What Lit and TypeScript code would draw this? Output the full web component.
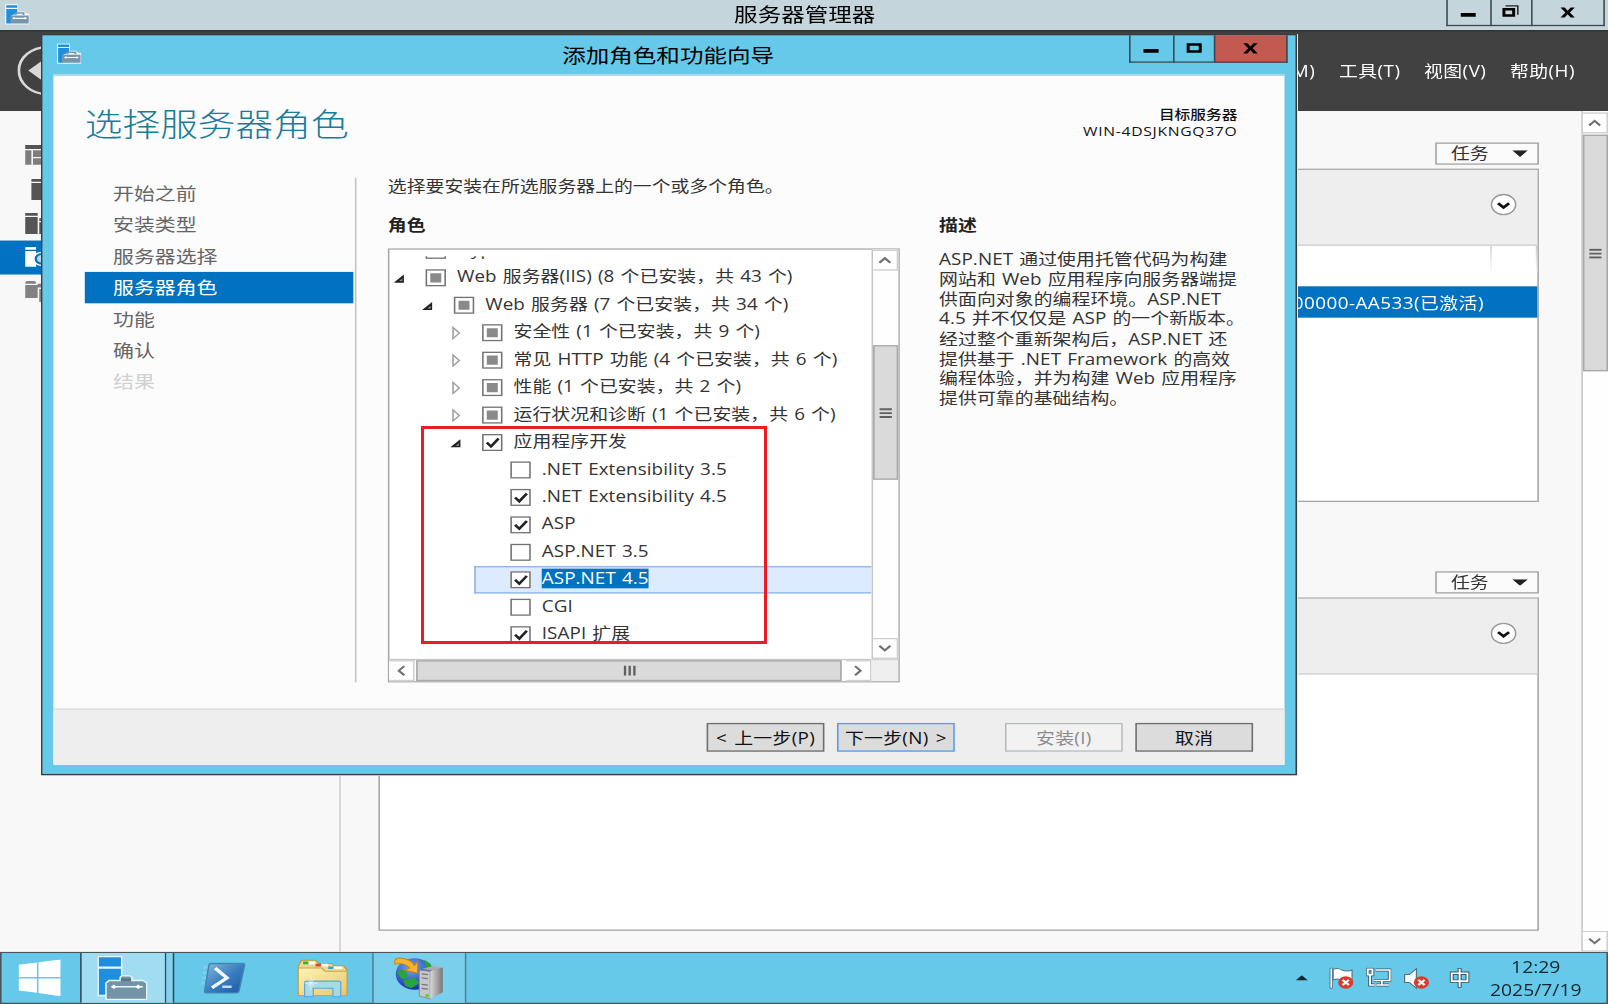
import { css, html, svg, LitElement, TemplateResult } from "lit";
import { customElement, property } from "lit/decorators.js";
import { classMap } from "lit/directives/class-map.js";

type CheckState = "none" | "partial" | "checked";

interface RoleRow {
  level: number;
  label: string;
  state: CheckState;
  expander?: "open" | "closed";
  selected?: boolean;
}

const STEPS = ["开始之前", "安装类型", "服务器选择", "服务器角色", "功能", "确认", "结果"];

const ROLES: RoleRow[] = [
  { level: 0, label: "Hyper-V", state: "none" },
  { level: 0, label: "Web 服务器(IIS) (8 个已安装，共 43 个)", state: "partial", expander: "open" },
  { level: 1, label: "Web 服务器 (7 个已安装，共 34 个)", state: "partial", expander: "open" },
  { level: 2, label: "安全性 (1 个已安装，共 9 个)", state: "partial", expander: "closed" },
  { level: 2, label: "常见 HTTP 功能 (4 个已安装，共 6 个)", state: "partial", expander: "closed" },
  { level: 2, label: "性能 (1 个已安装，共 2 个)", state: "partial", expander: "closed" },
  { level: 2, label: "运行状况和诊断 (1 个已安装，共 6 个)", state: "partial", expander: "closed" },
  { level: 2, label: "应用程序开发", state: "checked", expander: "open" },
  { level: 3, label: ".NET Extensibility 3.5", state: "none" },
  { level: 3, label: ".NET Extensibility 4.5", state: "checked" },
  { level: 3, label: "ASP", state: "checked" },
  { level: 3, label: "ASP.NET 3.5", state: "none" },
  { level: 3, label: "ASP.NET 4.5", state: "checked", selected: true },
  { level: 3, label: "CGI", state: "none" },
  { level: 3, label: "ISAPI 扩展", state: "checked" },
];

const DESCRIPTION = [
  "ASP.NET 通过使用托管代码为构建",
  "网站和 Web 应用程序向服务器端提",
  "供面向对象的编程环境。ASP.NET",
  "4.5 并不仅仅是 ASP 的一个新版本。",
  "经过整个重新架构后，ASP.NET 还",
  "提供基于 .NET Framework 的高效",
  "编程体验，并为构建 Web 应用程序",
  "提供可靠的基础结构。",
];

const toolboxIcon = html`
  <svg width="16" height="16" viewBox="0 0 16 16">
    <path d="M.3.3h8.200v5.500h4l1.500 1.500h1.700v8.400H.3z" fill="#fff" opacity=".85"/>
    <path d="M1 1h7v2H1zM1 3.800h7V7l-4 2v6H1z" fill="#1f8fdd"/>
    <path d="M3.700 8.800h11.600v6.200H3.700z" fill="#7695a9"/>
    <path d="M7 8.500V7h5v1.500" fill="none" stroke="#7695a9" stroke-width="1.200"/>
    <path d="M5 11h9" stroke="#fff" stroke-width=".9"/>
    <path d="M6 10.200v1.600M13 10.200v1.600" stroke="#fff" stroke-width=".9"/>
  </svg>`;

@customElement("window-buttons")
class WindowButtons extends LitElement {
  @property({ type: Boolean }) restored = false;

  static styles = css`
    :host {
      display: flex;
    }
    .btn {
      box-sizing: border-box;
      height: 100%;
      border: 1px solid #3c4a50;
      border-top: none;
      border-right: none;
    }
    .min {
      width: 28px;
    }
    .max {
      width: 26px;
    }
    .close {
      width: 47px;
      border-right: 1px solid #3c4a50;
      background: var(--close-color, transparent);
    }
    svg {
      display: block;
      width: 100%;
      height: 100%;
    }
  `;

  render() {
    return html`
      <div class="btn min">
        <svg viewBox="0 0 28 20"><path d="M8.500 10.500h10v3h-10z"/></svg>
      </div>
      <div class="btn max">
        <svg viewBox="0 0 26 20">
          ${this.restored
            ? svg`<path d="M8 7.500h6.500v5H8z" fill="none" stroke="#000" stroke-width="2"/>
                  <path d="M9 4.800h8.300v7" fill="none" stroke="#222" stroke-width="1"/>`
            : svg`<path d="M9 7h8v5.500H9z" fill="none" stroke="#000" stroke-width="2"/>`}
        </svg>
      </div>
      <div class="btn close">
        <svg viewBox="0 0 47 20">
          <path d="M18.500 6h2.800l2 2.600 2-2.600h2.800l-3.300 4 3.300 4h-2.800l-2-2.600-2 2.600h-2.800l3.300-4z"/>
        </svg>
      </div>
    `;
  }
}

@customElement("scroll-bar")
class ScrollBar extends LitElement {
  @property({ type: Boolean, reflect: true }) horizontal = false;
  @property({ type: Number }) start = 0;
  @property({ type: Number }) size = 0;

  static styles = css`
    :host {
      display: flex;
      flex-direction: column;
      box-sizing: border-box;
      background: #fefefe;
      border-left: 1px solid #c6c6c6;
    }
    :host([horizontal]) {
      flex-direction: row;
      border-left: none;
      border-top: 1px solid #c6c6c6;
    }
    .arrow {
      flex: none;
      box-sizing: border-box;
      width: 16px;
      height: 16px;
      background: #fff;
      border: 1px solid #cfcfcf;
      border-left: none;
    }
    .track {
      flex: 1;
      display: flex;
      flex-direction: inherit;
    }
    .thumb {
      box-sizing: border-box;
      display: flex;
      align-items: center;
      justify-content: center;
      background: #dadada;
      border: 1px solid #a8a8a8;
    }
    svg {
      display: block;
    }
    .left {
      transform: rotate(-90deg);
    }
    .right {
      transform: rotate(90deg);
    }
    .down {
      transform: rotate(180deg);
    }
  `;

  private arrow(direction: string) {
    return html`
      <div class="arrow">
        <svg class=${direction} width="15" height="14" viewBox="0 0 15 14">
          <path d="M4 9l3.500-3.500L11 9" fill="none" stroke="#707070" stroke-width="1.500"/>
        </svg>
      </div>`;
  }

  render() {
    const margin = this.horizontal ? "margin-left" : "margin-top";
    const length = this.horizontal ? "width" : "height";
    return html`
      ${this.arrow(this.horizontal ? "left" : "up")}
      <div class="track">
        <div class="thumb" style="${margin}:${this.start}px;${length}:${this.size}px">
          <svg width="8" height="8" viewBox="0 0 8 8" class=${this.horizontal ? "right" : ""}>
            <path d="M0 1h8M0 4h8M0 7h8" stroke="#606060" stroke-width="1.500"/>
          </svg>
        </div>
      </div>
      ${this.arrow(this.horizontal ? "right" : "down")}
    `;
  }
}

@customElement("server-manager")
class ServerManager extends LitElement {
  static styles = css`
    :host {
      display: flex;
      flex-direction: column;
      height: 728px;
    }
    .title-bar {
      box-sizing: border-box;
      height: 23px;
      padding: 0 2px 0 3px;
      display: grid;
      grid-template-columns: 101px 1fr 101px;
      background: #c4d6dc;
      color: #000;
    }
    .title-bar svg {
      margin-top: 3px;
    }
    .title {
      text-align: center;
      font-size: 15px;
      line-height: 22px;
    }
    window-buttons {
      height: 20px;
    }
    .banner {
      height: 62px;
      box-sizing: border-box;
      border-top: 1px solid #333;
      display: flex;
      align-items: center;
      justify-content: space-between;
      padding: 0 21px 1px 11px;
      background: #414141;
    }
    .menu {
      display: flex;
      gap: 15px;
      color: #fff;
      font-size: 12px;
      letter-spacing: 0.3px;
    }
    .body {
      flex: 1;
      display: flex;
      min-height: 0;
      background: #f8f8f8;
    }
    .nav {
      width: 217px;
      padding-top: 21px;
      border-right: 1px solid #cdcdcd;
      box-sizing: border-box;
    }
    .nav-item {
      height: 26px;
      padding-left: 16px;
      display: flex;
      align-items: center;
    }
    .nav-item.active {
      background: #0072bf;
    }
    .content {
      flex: 1;
      padding: 24px 27px 0 24px;
      display: flex;
      flex-direction: column;
      align-items: flex-end;
    }
    .tasks {
      flex: none;
      box-sizing: border-box;
      width: 66px;
      height: 17px;
      margin-bottom: 3px;
      padding: 0 6px 0 9px;
      display: flex;
      align-items: center;
      justify-content: space-between;
      border: 1px solid #a2a2a2;
      background: #fbfbfb;
      font-size: 12px;
      line-height: 15px;
      color: #333;
    }
    .panel {
      flex: none;
      box-sizing: border-box;
      width: 100%;
      height: 255px;
      margin-bottom: 53px;
      border: 1px solid #a5a5a5;
      background: #fff;
    }
    .filter {
      height: 57px;
      border-bottom: 1px solid #cfcfcf;
      background: #eee;
      display: flex;
      justify-content: flex-end;
      padding-right: 13px;
    }
    .filter svg {
      margin-top: 17.5px;
    }
    .columns {
      height: 31px;
      display: flex;
      justify-content: flex-end;
    }
    .column {
      width: 28px;
      height: 20px;
      border-left: 1px solid;
      border-right: 1px solid;
      border-image: linear-gradient(#ccc, #fff) 1;
    }
    .record {
      height: 24px;
      line-height: 25px;
      padding-right: 34px;
      text-align: right;
      background: #0072bf;
      color: #fff;
      font-size: 12px;
      letter-spacing: 0.3px;
    }
    scroll-bar {
      width: 17px;
      padding-top: 1px;
    }
  `;

  private navIcon(shape: TemplateResult, active = false) {
    return html`
      <div class=${classMap({ "nav-item": true, active })}>
        <svg width="16" height="16" viewBox="0 0 16 16">${shape}</svg>
      </div>`;
  }

  private panel(record?: string) {
    return html`
      <div class="tasks">
        <span>任务</span>
        <svg width="10" height="5" viewBox="0 0 10 5"><path d="M0 0h10L5 5z" fill="#222"/></svg>
      </div>
      <div class="panel">
        <div class="filter">
          <svg width="17" height="17" viewBox="0 0 17 17">
            <circle cx="8.500" cy="8.500" r="7.700" fill="#fff" stroke="#999"/>
            <path d="M5 7.500l3.500 3.200L12 7.500" fill="none" stroke="#111" stroke-width="1.900"/>
          </svg>
        </div>
        ${record
          ? html`
              <div class="columns"><div class="column"></div></div>
              <div class="record">${record}</div>`
          : ""}
      </div>`;
  }

  render() {
    return html`
      <div class="title-bar">
        ${toolboxIcon}
        <span class="title">服务器管理器</span>
        <window-buttons restored></window-buttons>
      </div>
      <div class="banner">
        <svg width="38" height="38" viewBox="0 0 38 38">
          <circle cx="19" cy="19" r="18" fill="none" stroke="#d8d8d8" stroke-width="1.800"/>
          <path d="M7 19L18 9.500v7h11v5H18v7z" fill="#d8d8d8"/>
        </svg>
        <div class="menu">
          <span>管理(M)</span><span>工具(T)</span><span>视图(V)</span><span>帮助(H)</span>
        </div>
      </div>
      <div class="body">
        <div class="nav">
          ${this.navIcon(svg`<path d="M0 0h16v3H0z" fill="#555"/><path d="M0 4h4v11H0zM5 4h11v5H5zM5 10h11v5H5z" fill="#7d7d7d"/>`)}
          ${this.navIcon(svg`<path d="M4 0h10v2H4zM4 3h10v13H4z" fill="#555"/>`)}
          ${this.navIcon(svg`<path d="M0 0h8v2H0zM0 3h8v13H0zM9 4h6v2H9zM9 7h6v9H9z" fill="#555"/>`)}
          ${this.navIcon(
            svg`<path d="M0 0h7v2H0zM0 3h7v12H0z" fill="#fff"/>
                <circle cx="10.500" cy="9" r="5" fill="#0072bf" stroke="#fff"/>
                <circle cx="10.500" cy="9" r="3" fill="#b7d8ef"/>`,
            true
          )}
          ${this.navIcon(svg`<path d="M0 1l1-1h5l1 1v1H0zM0 3h8v10H0zM8 2h6v3H8zM9 6h6v10H9z" fill="#828282"/>`)}
        </div>
        <div class="content">
          ${this.panel("00000-AA533(已激活)")} ${this.panel()}
        </div>
        <scroll-bar .start=${1} .size=${181}></scroll-bar>
      </div>
    `;
  }
}

@customElement("role-tree")
class RoleTree extends LitElement {
  static styles = css`
    :host {
      box-sizing: border-box;
      display: grid;
      grid-template-columns: 1fr 17px;
      grid-template-rows: 1fr 17px;
      width: 326px;
      height: 332px;
      border: 1px solid #a9a9a9;
      background: #fff;
    }
    .viewport {
      overflow: hidden;
      height: 295px;
      margin-top: 5px;
    }
    .rows {
      margin-top: -15px;
    }
    .row {
      position: relative;
      display: flex;
      align-items: center;
      height: 21px;
      color: #333;
      font-size: 12px;
      letter-spacing: 0.05px;
      word-spacing: 0.7px;
      white-space: pre;
    }
    .selection {
      position: absolute;
      inset: 0 0 0 54px;
      border: 1px solid #8fb4e6;
      border-right: none;
      background: #dcebfe;
    }
    .expander {
      width: 20px;
      height: 11px;
      flex: none;
    }
    .box {
      position: relative;
      box-sizing: border-box;
      flex: none;
      width: 13px;
      height: 13px;
      margin-right: 7px;
      border: 1px solid #737373;
      background: #fff;
    }
    .box svg {
      display: block;
    }
    .label {
      position: relative;
      line-height: 15px;
      margin-top: -2px;
    }
    .label.selected {
      background: #0072bf;
      color: #fff;
    }
    .corner {
      background: #efefef;
      border-top: 1px solid #d0d0d0;
    }
  `;

  private mark(state: CheckState) {
    if (state === "partial") {
      return svg`<path d="M2 2h7v7H2z" fill="#8a8a8a"/>`;
    }
    return state === "checked"
      ? svg`<path d="M2 5.500l2.700 3L9.500 2.500" fill="none" stroke="#222" stroke-width="1.800"/>`
      : "";
  }

  private row(role: RoleRow) {
    return html`
      <div class="row">
        ${role.selected ? html`<div class="selection"></div>` : ""}
        <svg class="expander" style="margin-left:${3 + role.level * 18}px" viewBox="0 0 20 11">
          ${role.expander === "open" ? svg`<path d="M6.200 3v6.200H-.3z" fill="#222"/><path d="M5.200 6v2H3.200z" fill="#999"/>` : ""}
          ${role.expander === "closed" ? svg`<path d="M1.500 1.500v8.500L5.500 5.800z" fill="#fff" stroke="#a0a0a0"/>` : ""}
        </svg>
        <div class="box"><svg width="11" height="11">${this.mark(role.state)}</svg></div>
        <span class=${classMap({ label: true, selected: !!role.selected })}>${role.label}</span>
      </div>`;
  }

  render() {
    return html`
      <div class="viewport">
        <div class="rows">${ROLES.map((role) => this.row(role))}</div>
      </div>
      <scroll-bar .start=${57} .size=${103}></scroll-bar>
      <scroll-bar horizontal .start=${1} .size=${271}></scroll-bar>
      <div class="corner"></div>
    `;
  }
}

@customElement("role-wizard")
class RoleWizard extends LitElement {
  static styles = css`
    :host {
      box-sizing: border-box;
      display: flex;
      flex-direction: column;
      width: 800px;
      height: 567px;
      padding: 0 7px 7px;
      border: 1px solid #3b3b3b;
      background: #66c9ea;
    }
    .title-bar {
      height: 30px;
      display: grid;
      grid-template-columns: 102px 1fr 101px;
      padding-left: 2px;
      margin-right: -2px;
    }
    .title-bar svg {
      margin-top: 6px;
    }
    .title {
      text-align: center;
      font-size: 15px;
      line-height: 30px;
      padding-right: 6px;
    }
    window-buttons {
      height: 21px;
      --close-color: #c35a50;
    }
    .page {
      flex: 1;
      display: flex;
      flex-direction: column;
      background: #fcfcfc;
      border-top: 1px solid #a4cfdf;
    }
    .head {
      display: flex;
      justify-content: space-between;
      height: 78px;
      box-sizing: border-box;
      padding: 20px 30px 0 20px;
    }
    h1 {
      margin: 0;
      font-size: 24px;
      font-weight: 300;
      line-height: 34px;
      color: #177d9b;
    }
    .target {
      margin-top: 3px;
      font-size: 10px;
      line-height: 12.5px;
      text-align: right;
      color: #111;
    }
    .target .caption {
      font-weight: 500;
    }
    .target .host {
      letter-spacing: 0.43px;
    }
    .columns {
      flex: 1;
      display: flex;
      padding-left: 20px;
    }
    .steps {
      width: 172px;
      height: 386px;
      border-right: 1px solid #c3c3c3;
    }
    .step {
      width: 171px;
      height: 24px;
      box-sizing: border-box;
      padding-left: 18px;
      font-size: 13.3px;
      line-height: 25px;
      color: #666;
    }
    .step.active {
      background: #0072bf;
      color: #fff;
    }
    .step.disabled {
      color: #d0d0d0;
    }
    .roles {
      margin-left: 20px;
      width: 326px;
      font-size: 12px;
      color: #333;
    }
    .intro {
      line-height: 14px;
      height: 29px;
    }
    .caption-bold {
      font-weight: 700;
      line-height: 15px;
      height: 25px;
      color: #222;
      font-size: 12px;
    }
    .description {
      margin-left: 25px;
      padding-top: 29px;
      font-size: 12px;
      color: #333;
    }
    .text {
      padding-top: 1px;
      letter-spacing: 0.05px;
      word-spacing: 0.7px;
    }
    .line {
      line-height: 15.13px;
      white-space: nowrap;
    }
    .footer {
      height: 42px;
      display: flex;
      align-items: center;
      justify-content: flex-end;
      gap: 8px;
      padding-right: 20px;
      border-top: 1px solid #dcdcdc;
      background: #eee;
    }
    button {
      box-sizing: border-box;
      width: 75px;
      height: 22px;
      padding: 0;
      border: 1px solid #6e6e6e;
      background: #dcdcdc;
      font: inherit;
      font-size: 12px;
      line-height: 19px;
      letter-spacing: 0.2px;
      word-spacing: 1.2px;
      white-space: nowrap;
      color: #111;
    }
    .primary {
      border-color: #4aa0fa;
      margin-right: 24px;
    }
    button:disabled {
      border-color: #b6bbc0;
      background: #f2f2f2;
      color: #8c8c8c;
    }
  `;

  render() {
    return html`
      <div class="title-bar">
        ${toolboxIcon}
        <span class="title">添加角色和功能向导</span>
        <window-buttons></window-buttons>
      </div>
      <div class="page">
        <div class="head">
          <h1>选择服务器角色</h1>
          <div class="target">
            <div class="caption">目标服务器</div>
            <div class="host">WIN-4DSJKNGQ37O</div>
          </div>
        </div>
        <div class="columns">
          <div class="steps">
            ${STEPS.map(
              (step, i) => html`<div class=${classMap({ step: true, active: i === 3, disabled: i === 6 })}>${step}</div>`
            )}
          </div>
          <div class="roles">
            <div class="intro">选择要安装在所选服务器上的一个或多个角色。</div>
            <div class="caption-bold">角色</div>
            <role-tree></role-tree>
          </div>
          <div class="description">
            <div class="caption-bold">描述</div>
            <div class="text">${DESCRIPTION.map((line) => html`<div class="line">${line}</div>`)}</div>
          </div>
        </div>
        <div class="footer">
          <button>&lt; 上一步(P)</button>
          <button class="primary">下一步(N) &gt;</button>
          <button disabled>安装(I)</button>
          <button>取消</button>
        </div>
      </div>
    `;
  }
}

@customElement("task-bar")
class TaskBar extends LitElement {
  static styles = css`
    :host {
      box-sizing: border-box;
      display: flex;
      justify-content: space-between;
      height: 40px;
      border: 1px solid #46575e;
      background: #66c9ea;
    }
    .apps,
    .tray {
      display: flex;
      align-items: center;
    }
    .app {
      box-sizing: border-box;
      height: 38px;
      display: flex;
      align-items: center;
      justify-content: center;
    }
    .start {
      width: 50px;
      padding-right: 2px;
    }
    .current {
      width: 55px;
      border: solid #2f4b57;
      border-width: 0 1px;
      background: #a0ddf2;
      padding-right: 2px;
    }
    .stack {
      width: 5px;
      border-right: 1px solid #2f4b57;
      background: #82d2ee;
    }
    .shell {
      width: 65px;
      padding-right: 2px;
    }
    .files {
      width: 61px;
      padding-right: 2px;
    }
    .iis {
      width: 60px;
      border: solid #4b8298;
      border-width: 0 1px;
      background: #7ad0ec;
    }
    .tray {
      padding-right: 14px;
    }
    .tray svg {
      margin-right: 8px;
    }
    .clock {
      width: 62px;
      margin: 2px 0 0 3px;
      text-align: center;
      font-size: 12.3px;
      line-height: 18.5px;
      color: #10252d;
    }
  `;

  render() {
    return html`
      <div class="apps">
        <div class="app start">
          <svg width="28" height="28" viewBox="0 0 28 28" fill="#fff">
            <path d="M1 4l11.500-1.700v11H1zM13.500 2.100L27.500 0v13.300h-14zM1 14.500h11.500v10.800L1 23.600zM13.500 14.500h14V28l-14-2.400z"/>
          </svg>
        </div>
        <div class="app current">
          <svg width="32" height="34" viewBox="0 0 32 34">
            <path d="M.500.800h15v8h-15zM.500 9.500h15V20l-9 3v7.500h-6z" fill="#1f8fdd" stroke="#e6f7fd"/>
            <path d="M14.500 19v-2.500l1-1H21l1 1V19h7l2.500 2v12.500h-26V21l2-2z" fill="#7593a7" stroke="#e6f7fd"/>
            <path d="M9 23.800h20" stroke="#e6f7fd" stroke-width="1.200"/>
            <path d="M10.500 22l1.800 1.800-1.800 1.800-1.800-1.800zM26 22l1.800 1.800-1.800 1.800-1.800-1.800z" fill="#fff"/>
            <path d="M15 18.500h6.500" stroke="#5c7586" stroke-width="2"/>
          </svg>
        </div>
        <div class="app stack"></div>
        <div class="app shell">
          <svg width="29" height="25" viewBox="0 0 29 25">
            <defs>
              <linearGradient id="ps" x1="0" y1="0" x2="1" y2="1">
                <stop offset="0" stop-color="#8db9dc"/>
                <stop offset=".5" stop-color="#3a7fc0"/>
                <stop offset="1" stop-color="#1d58a5"/>
              </linearGradient>
            </defs>
            <path d="M2 4h4M1 8h4M1 12h3M0 16h3" stroke="#8fd8f0" stroke-width="2" opacity=".6"/>
            <path d="M6.500 1h20q1.500 0 1.200 1.500L24.200 22q-.3 1.500-1.800 1.500h-19q-1.500 0-1.100-1.500L5 2.500Q5.300 1 6.500 1z" fill="url(#ps)" stroke="#3f86b5"/>
            <path d="M9 4.500l7.500 7.500L7 19.500" fill="none" stroke="#f2f8fc" stroke-width="2.400"/>
            <path d="M13.500 18.800h6" stroke="#c6dcef" stroke-width="2"/>
          </svg>
        </div>
        <div class="app files">
          <svg width="33" height="31" viewBox="0 0 33 31">
            <defs>
              <linearGradient id="folder" x1="0" y1="0" x2="1" y2="1">
                <stop offset="0" stop-color="#fdf3b4"/>
                <stop offset="1" stop-color="#e8c76c"/>
              </linearGradient>
            </defs>
            <path d="M1 6l2-4.500h9L14 4h8l2 2h6l2 3v18H1z" fill="#ecd98e" stroke="#b99a45" stroke-width=".8"/>
            <path d="M4 2.500h3.500v2H4z" fill="#35b235"/>
            <path d="M12 4.300h3.500v2H12z" fill="#d84931"/>
            <path d="M20 6.300h3.500v2H20z" fill="#32a0e6"/>
            <path d="M7.500 2.500h4v2h-4zM15.500 4.300H20v2h-4.500zM23.500 6.300H29v2h-5.500z" fill="#fff"/>
            <path d="M1 7.500h15l2 2.500h14v18.500H1z" fill="url(#folder)" stroke="#c3a650" stroke-width=".8"/>
            <path d="M5 29.500V19q0-1.500 1.500-1.500h20Q28 17.500 28 19v10.500h-5V23H10.500v6.500z" fill="#9dd9f2" fill-opacity=".85" stroke="#5aabd2" stroke-width=".8"/>
            <path d="M9 14v10M5 19h8M7 16.500l4 5M11 16.500l-4 5" stroke="#fff" stroke-width=".6" opacity=".8"/>
          </svg>
        </div>
        <div class="app iis">
          <svg width="32" height="33" viewBox="0 0 32 33">
            <defs>
              <radialGradient id="globe" cx=".4" cy=".3" r=".7">
                <stop offset="0" stop-color="#6fa8f0"/>
                <stop offset="1" stop-color="#1834a8"/>
              </radialGradient>
              <linearGradient id="tower">
                <stop offset="0" stop-color="#d8d8d8"/>
                <stop offset="1" stop-color="#777"/>
              </linearGradient>
            </defs>
            <circle cx="13" cy="13" r="12" fill="url(#globe)"/>
            <path d="M2 11q4-3 6 1t-2 5q-3-1-4-6zM6 18l7-2 3 4-5 4-4-2zM19 2l4 3 2 5-5-2z" fill="#29a43a"/>
            <path d="M18 9l7-2 6 1-6 3z" fill="#aaa"/>
            <path d="M16 10l7 1v21l-7-2z" fill="#c5c7c8" stroke="#828282" stroke-width=".6"/>
            <path d="M23 11l8-3v19l-8 5z" fill="url(#tower)"/>
            <path d="M17.500 13l4 .6M17.500 16l4 .6M17.500 21l4 .6M17.500 24l4 .6" stroke="#777"/>
            <circle cx="21" cy="29.500" r="1.200" fill="#54d21b"/>
            <path d="M.5 5.500Q-.5 0 5 1q6 1 8 5.500l2-3.500v9.500L6.500 10 10 8.500Q6.500 4 .5 5.500z" fill="#f9b32b" stroke="#c77e12" stroke-width=".7"/>
          </svg>
        </div>
      </div>
      <div class="tray">
        <svg width="8" height="4" viewBox="0 0 8 4" style="margin-right:13px"><path d="M0 4l4-4 4 4z" fill="#10252d"/></svg>
        <svg width="16" height="17" viewBox="0 0 16 17">
          <path d="M1 .500h1.500V16H1z" fill="#fff" stroke="#3f6f82" stroke-width=".6"/>
          <path d="M3 1.500q3-1.500 5.500.5 3 1.500 6.500 0v8q-3 1.500-6 0-3-2-6-.5z" fill="#fff" stroke="#4f7482" stroke-width=".7"/>
          <circle cx="11" cy="11.500" r="4.800" fill="#db3b2c"/>
          <path d="M9 9.500l4 4M13 9.500l-4 4" stroke="#fff" stroke-width="1.500"/>
        </svg>
        <svg width="16" height="16" viewBox="0 0 16 16" fill="none">
          <path d="M6 2h9v8H5M10 10v3M6.500 13.500h8M2.500 6v7.500h3M1 1.500h3v4H1z" stroke="#37596a" stroke-width="2.400"/>
          <path d="M6 2h9v8H5M10 10v3M6.500 13.500h8M2.500 6v7.500h3M1 1.500h3v4H1z" stroke="#fff" stroke-width="1.200"/>
        </svg>
        <svg width="16" height="17" viewBox="0 0 16 17">
          <path d="M.500 5.500h3L8 1v15l-4.500-4.500h-3z" fill="#fff" stroke="#4f7482" stroke-width=".8"/>
          <circle cx="11.200" cy="11.500" r="4.800" fill="#db3b2c"/>
          <path d="M9.200 9.500l4 4M13.200 9.500l-4 4" stroke="#fff" stroke-width="1.500"/>
        </svg>
        <svg width="13" height="16" viewBox="0 0 13 16" fill="none" style="margin-left:5px">
          <path d="M1.500 4.500h10v6h-10zM6.500.500v15" stroke="#37596a" stroke-width="2.600"/>
          <path d="M1.500 4.500h10v6h-10zM6.500 1v14" stroke="#fff" stroke-width="1.200"/>
        </svg>
        <div class="clock">
          <div>12:29</div>
          <div>2025/7/19</div>
        </div>
      </div>
    `;
  }
}

@customElement("app-root")
class AppRoot extends LitElement {
  static styles = css`
    :host {
      display: block;
      position: relative;
      width: 1608px;
      height: 1004px;
      overflow: hidden;
      font-family: "Open Sans", "Noto Sans CJK SC", sans-serif;
    }
    /* 1024x768 desktop stretched over the window */
    .desktop {
      position: relative;
      width: 1024px;
      height: 768px;
      transform: scale(1.5703, 1.3073);
      transform-origin: 0 0;
    }
    role-wizard {
      position: absolute;
      left: 26px;
      top: 26px;
    }
    .marker {
      position: absolute;
      box-sizing: border-box;
      left: 421px;
      top: 426px;
      width: 346px;
      height: 218px;
      border: 3px solid #ed1c24;
    }
  `;

  render() {
    return html`
      <div class="desktop" lang="zh-CN">
        <server-manager></server-manager>
        <task-bar></task-bar>
        <role-wizard></role-wizard>
      </div>
      <div class="marker"></div>
    `;
  }
}
